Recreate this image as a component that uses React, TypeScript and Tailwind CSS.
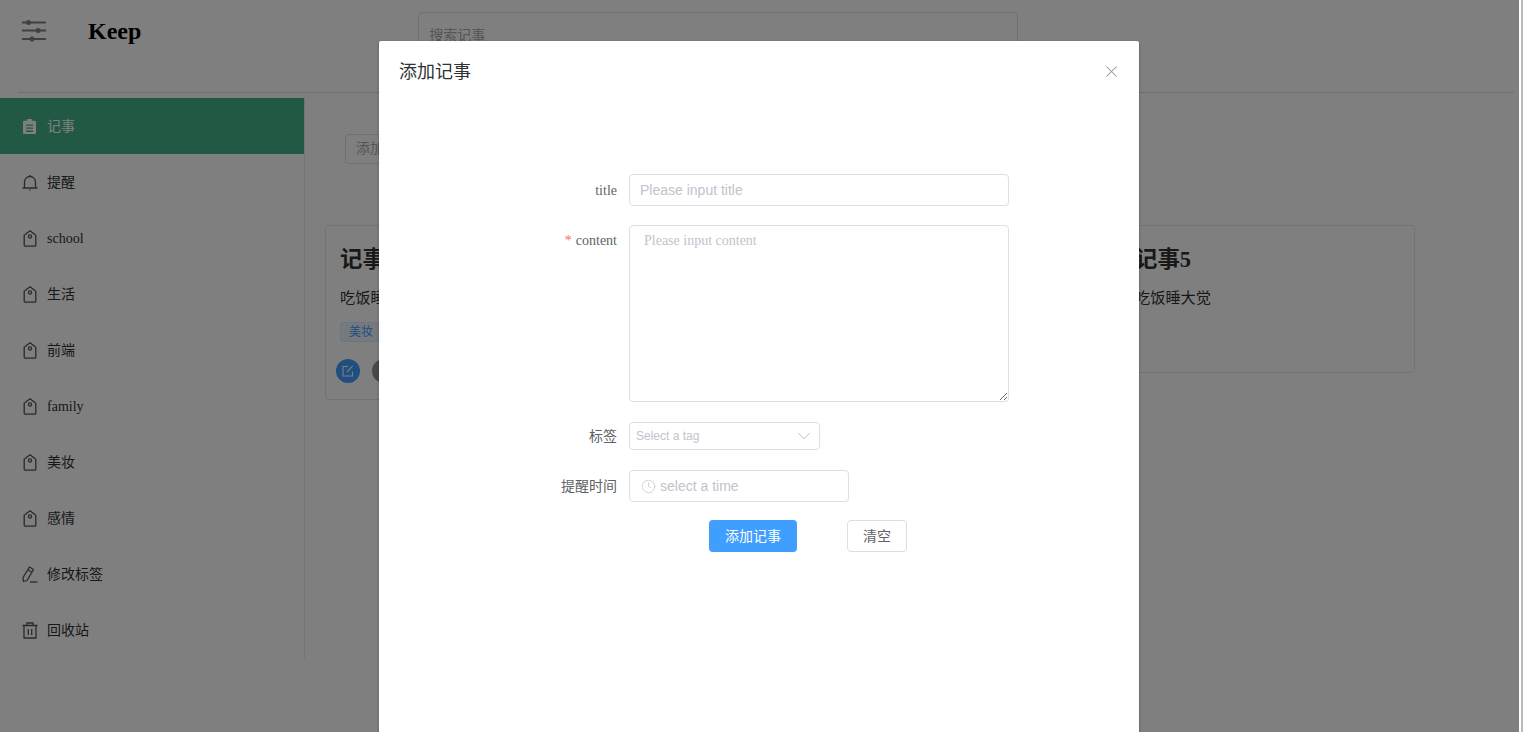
import { ChevronDown, Clock, X } from "lucide-react";

const serif = "font-['Liberation_Serif','Noto_Sans_CJK_SC',serif]";
const sans = "font-['Liberation_Sans','Noto_Sans_CJK_SC',sans-serif]";

function SlidersIcon() {
  return (
    <svg width="24" height="24" viewBox="0 0 24 24" fill="none" stroke="#808080" strokeWidth="2">
      <path d="M0 3.500h24M0 11.500h24M0 20h24" />
      <circle cx="6.500" cy="3.500" r="2.500" fill="#808080" stroke="none" />
      <circle cx="16" cy="11.500" r="2.500" fill="#808080" stroke="none" />
      <circle cx="10" cy="20" r="2.500" fill="#808080" stroke="none" />
    </svg>
  );
}

function TagIcon() {
  return (
    <svg width="16" height="17" viewBox="-2 0 16 17" fill="none" stroke="#555" strokeWidth="1.300">
      <path d="M.2 5.200C2 4.200 4 1.800 6 .9c2 .9 4 3.300 5.800 4.300v10a1 1 0 0 1-1 1H1.200a1 1 0 0 1-1-1z" strokeLinejoin="round" />
      <circle cx="6" cy="6.500" r="1.600" />
    </svg>
  );
}

function BellIcon() {
  return (
    <svg width="16" height="17" viewBox="0 0 16 17" fill="none" stroke="#555" strokeWidth="1.300">
      <path d="M2.500 14V8a5.500 5.500 0 0 1 11 0v6M.5 14h15" />
      <path d="M8 1v1.500M7.500 16h1" />
    </svg>
  );
}

function ClipboardIcon() {
  return (
    <svg width="13" height="15" viewBox="0 0 14 16">
      <path
        fill="#ffffff"
        fillRule="evenodd"
        d="M4.500 0h5v1.800H13a1 1 0 0 1 1 1V15a1 1 0 0 1-1 1H1a1 1 0 0 1-1-1V2.800a1 1 0 0 1 1-1h3.500zM3.200 5.800v1.400h7.600V5.800zm0 3.300v1.400h7.600V9.100zm0 3.300v1.400h7.600v-1.400z"
      />
    </svg>
  );
}

function PencilIcon() {
  return (
    <svg width="16" height="17" viewBox="0 0 16 17" fill="none" stroke="#555" strokeWidth="1.300">
      <path d="M7.500 1 11.500 3.500 5 14.500 1.500 15.500 1 11.500z" strokeLinejoin="round" />
      <path d="m5.800 3.800 4 2.500" />
      <path d="M8 16h7.500" />
    </svg>
  );
}

function TrashIcon() {
  return (
    <svg width="16" height="17" viewBox="0 0 16 17" fill="none" stroke="#555" strokeWidth="1.300">
      <path d="M.5 3.500h15M5 3.500V1h6v2.500M2 3.500V16h12V3.500M6.300 7v6M9.700 7v6" />
    </svg>
  );
}

function EditIcon() {
  return (
    <svg width="12" height="12" viewBox="0 0 12 12" fill="none" stroke="#ffffff" strokeWidth="1.100">
      <path d="M10.500 6.500v4.500h-9.500v-9.500h5" />
      <path d="M5 7 10.500 1.200" />
    </svg>
  );
}

const menu = [
  { label: "提醒", icon: <BellIcon /> },
  { label: "school", icon: <TagIcon /> },
  { label: "生活", icon: <TagIcon /> },
  { label: "前端", icon: <TagIcon /> },
  { label: "family", icon: <TagIcon /> },
  { label: "美妆", icon: <TagIcon /> },
  { label: "感情", icon: <TagIcon /> },
  { label: "修改标签", icon: <PencilIcon /> },
  { label: "回收站", icon: <TrashIcon /> },
];

function Sidebar() {
  return (
    <aside className="w-[305px] h-[560px] shrink-0 border-r border-[#e6e6e6]">
      <div className="h-14 flex items-center gap-[11px] pl-[23px] bg-[#42b38a] text-white text-sm">
        <ClipboardIcon />
        <span className="pt-[1px]">记事</span>
      </div>
      {menu.map((it) => (
        <div key={it.label} className="h-14 flex items-center text-sm text-[#303133]">
          <span className="w-[47px] pl-[22px] flex">{it.icon}</span>
          <span className="pt-[1px]">{it.label}</span>
        </div>
      ))}
    </aside>
  );
}

function Page() {
  return (
    <div className={`h-screen bg-white ${serif}`}>
      <header className="mx-[18px] mr-[10px] h-[93px] flex border-b border-[#dcdcdc]">
        <div className="pl-[4px] pt-[19px]">
          <SlidersIcon />
        </div>
        <div className="ml-[42px] pt-[15px] text-2xl font-bold text-black">Keep</div>
        <div className="ml-[277px] mt-3 w-[600px] h-[46px] border border-[#dcdfe6] rounded pl-[10px] pt-[2px] flex items-center text-sm text-[#aaa]">
          搜索记事
        </div>
      </header>
      <div className="flex pt-[5px]">
        <Sidebar />
        <main className="pl-5 pt-[36px] flex-1">
          <div className="ml-5 w-[300px] h-[30px] border border-[#dcdfe6] rounded px-[10px] flex items-center text-sm text-[#aaa]">
            添加记事
          </div>
          <div className="mt-[61px] flex gap-[104px] items-start">
            <div className="w-[294px] h-[175px] border border-[#e4e7ed] rounded px-[14px] pt-4">
              <h2 className="text-[22.4px] font-bold text-[#303133] leading-9">记事1</h2>
              <p className="mt-[8px] text-[15.2px] leading-6 text-[#303133]">吃饭睡大觉</p>
              <span className="mt-[12px] inline-flex h-5 px-[8px] items-center rounded-[4px] border border-[#d9ecff] bg-[#ecf5ff] text-xs text-[#409eff]">
                美妆
              </span>
              <div className="mt-[16px] -ml-[4px] flex gap-3">
                <span className="w-6 h-6 rounded-full bg-[#409eff] flex items-center justify-center">
                  <EditIcon />
                </span>
                <span className="w-6 h-6 rounded-full bg-[#909399]" />
              </div>
            </div>
            <div className="w-[294px] h-[175px]" />
            <div className="w-[294px] h-[148px] border border-[#e4e7ed] rounded px-[13px] pt-4">
              <h2 className="text-[22.4px] font-bold text-[#303133] leading-9">记事5</h2>
              <p className="mt-[8px] text-[15.2px] leading-6 text-[#303133]">吃饭睡大觉</p>
            </div>
          </div>
        </main>
      </div>
    </div>
  );
}

function Field({
  label,
  required,
  small,
  children,
}: {
  label: string;
  required?: boolean;
  small?: boolean;
  children: React.ReactNode;
}) {
  return (
    <div className="flex items-start">
      <label
        className={`w-[120px] pr-3 flex items-center justify-end text-sm text-[#606266] ${small ? "h-7" : "h-8"} ${
          required ? "" : "pt-[2px]"
        } ${serif}`}
      >
        {required && <span className="text-[#f56c6c] mr-1">*</span>}
        {label}
      </label>
      {children}
    </div>
  );
}

function Dialog() {
  return (
    <div className="absolute inset-0 right-[5px] bg-[rgba(0,0,0,0.5)] overflow-hidden">
      <div className="absolute left-[379px] top-[41px] w-[760px] h-[760px] bg-white rounded-[2px] shadow-[0_1px_3px_rgba(0,0,0,0.3)]">
        <div className="h-[62px] pl-5 pr-[18px] flex items-center justify-between">
          <span className={`text-lg text-[#303133] ${serif}`}>添加记事</span>
          <X size={19} strokeWidth={1.300} className="text-[#909399] -mt-[2px]" />
        </div>
        <form className="ml-[130px] mt-[71px] flex flex-col">
          <Field label="title">
            <div className={`w-[380px] h-8 border border-[#dcdfe6] rounded px-[10px] flex items-center text-sm text-[#c0c4cc] ${sans}`}>
              Please input title
            </div>
          </Field>
          <div className="mt-[19px]">
            <Field label="content" required>
              <textarea
                placeholder="Please input content"
                className={`w-[380px] h-[177px] border border-[#dcdfe6] rounded px-[14px] py-[5px] text-sm leading-[20px] placeholder:text-[#c0c4cc] outline-none ${serif}`}
              />
            </Field>
          </div>
          <div className="mt-5">
            <Field label="标签" small>
              <div className={`w-[191px] h-7 border border-[#dcdfe6] rounded pl-[6px] pr-[4px] flex items-center justify-between text-xs text-[#c0c4cc] ${sans}`}>
                Select a tag
                <ChevronDown size={22} strokeWidth={0.900} className="text-[#b0b3ba]" />
              </div>
            </Field>
          </div>
          <div className="mt-5">
            <Field label="提醒时间">
              <div className={`w-[220px] h-8 border border-[#dcdfe6] rounded pl-[11px] flex items-center gap-[4px] text-sm text-[#c0c4cc] ${sans}`}>
                <Clock size={15} strokeWidth={1.200} />
                select a time
              </div>
            </Field>
          </div>
          <div className={`mt-[18px] ml-[200px] flex gap-[50px] text-sm ${sans}`}>
            <button type="button" className="w-[88px] h-8 rounded bg-[#409eff] text-white">
              添加记事
            </button>
            <button type="button" className="w-[60px] h-8 rounded border border-[#dcdfe6] text-[#606266]">
              清空
            </button>
          </div>
        </form>
      </div>
    </div>
  );
}

export default function App() {
  return (
    <div className="relative h-screen overflow-hidden">
      <Page />
      <Dialog />
      {/* scrollbar strip the overlay does not cover */}
      <div className="absolute inset-y-0 right-0 w-[5px] bg-white pl-[2px]">
        <div className="w-[2px] h-full bg-[#bbbbbb]" />
      </div>
    </div>
  );
}
